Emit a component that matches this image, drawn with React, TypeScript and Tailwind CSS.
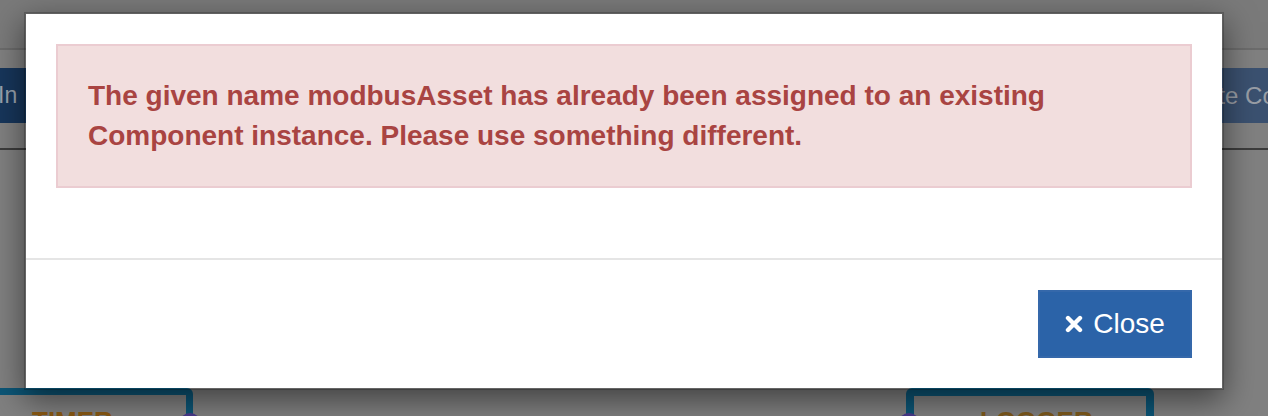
import React from "react";

const FONT = { fontFamily: '"Liberation Sans", Arial, Helvetica, sans-serif' };

function RemoveIcon() {
  return (
    <svg width="18" height="18" viewBox="0 0 18 18" aria-hidden="true">
      <path
        d="M3 3 L15 15 M15 3 L3 15"
        stroke="#fff"
        strokeWidth="4.4"
        strokeLinecap="round"
      />
    </svg>
  );
}

export default function App() {
  return (
    <div
      className="relative w-[1268px] h-[416px] overflow-hidden bg-[#808080] flex flex-col"
      style={FONT}
    >
      {/* page underneath, dimmed by the backdrop */}
      <div className="h-[50px] shrink-0 bg-[#7a7a7a] border-b-2 border-[#6c6c6c]" />
      <div className="h-[100px] shrink-0 border-b-2 border-[#3c3c3c] flex items-start justify-between pt-[18px]">
        <div className="h-[55px] w-[60px] bg-[#17365b] flex items-center text-[23px] text-[#9aa3ae] leading-none -ml-[2px]">
          In
        </div>
        <div className="h-[55px] w-[120px] bg-[#3b5170] flex items-center overflow-hidden whitespace-nowrap text-[24px] text-[#999ea6] leading-none pl-[21px]">
          Delete Component
        </div>
      </div>

      {/* diagram canvas */}
      <div className="relative flex-1">
        <div className="absolute left-[-100px] top-[238px] w-[293px] h-[120px] border-[7px] border-[#0c5677] rounded-[6px]" />
        <div className="absolute left-[32px] top-[258px] text-[26px] font-bold text-[#8a5a14] leading-none">
          TIMER
        </div>
        <div className="absolute left-[179px] top-[263px] w-[22px] h-[22px] rounded-full bg-[#4a3a8c]" />

        <div className="absolute left-[906px] top-[238px] w-[248px] h-[120px] border-[8px] border-[#0c5677] rounded-[6px]" />
        <div className="absolute left-[980px] top-[258px] text-[26px] font-bold text-[#7e5a1c] leading-none">
          LOGGER
        </div>
        <div className="absolute left-[898px] top-[263px] w-[22px] h-[22px] rounded-full bg-[#4a3a8c]" />
      </div>

      {/* modal */}
      <div className="absolute left-[24px] top-[12px] w-[1200px] bg-white bg-clip-padding border-2 border-black/20 shadow-[0_10px_30px_rgba(0,0,0,0.5)]">
        <div className="p-[30px]">
          <div className="mb-[40px] p-[30px] bg-[#f2dede] border-2 border-[#ebccd1] text-[#a94442] text-[28px] leading-[40px] font-bold">
            The given name modbusAsset has already been assigned to an existing
            Component instance. Please use something different.
          </div>
        </div>
        <div className="border-t-2 border-[#e5e5e5] p-[30px] flex justify-end">
          <button className="w-[154px] h-[68px] bg-[#2b63a8] border-2 border-[#3568aa] text-white text-[28px] flex items-center justify-center gap-[10px]">
            <RemoveIcon />
            <span>Close</span>
          </button>
        </div>
      </div>
    </div>
  );
}
